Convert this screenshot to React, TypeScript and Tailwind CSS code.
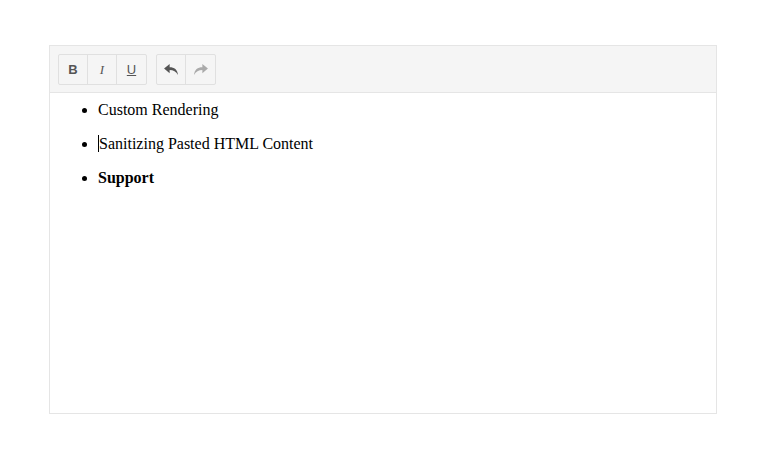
import React from "react";

const Btn = ({ children, last }: { children: React.ReactNode; last?: boolean }) => (
  <div className={`w-[29px] h-[29px] flex items-center justify-center ${last ? "" : "border-r border-[#e0e0e0]"}`}>{children}</div>
);

export default function App() {
  return (
    <div className="w-[770px] h-[463px] bg-white pt-[45px] pl-[49px]">
      <div className="w-[668px] h-[369px] border border-[#e5e5e5] flex flex-col">
        <div className="h-[47px] bg-[#f5f5f5] border-b border-[#e5e5e5] flex items-start pt-[8px] pl-[8px] gap-[9px]">
          <div className="flex border border-[#e0e0e0] rounded-[2px] bg-[#f5f5f5]" style={{ fontFamily: "'Liberation Sans', Arial, sans-serif" }}>
            <Btn><span className="text-[13px] font-bold text-[#555]">B</span></Btn>
            <Btn><span className="text-[13px] italic text-[#555]" style={{ fontFamily: "'Liberation Serif', serif" }}>I</span></Btn>
            <Btn last><span className="text-[13px] underline text-[#555]">U</span></Btn>
          </div>
          <div className="flex border border-[#e0e0e0] rounded-[2px] bg-[#f5f5f5]">
            <Btn>
              <svg width="15" height="13" viewBox="0 0 16 14"><path d="M6 1 L0 6 L6 11 V7.5 C10 7.5 13 9 15 13 C14.5 7 11 4.5 6 4.5 Z" fill="#555"/></svg>
            </Btn>
            <Btn last>
              <svg width="15" height="13" viewBox="0 0 16 14" style={{ transform: "scaleX(-1)" }}><path d="M6 1 L0 6 L6 11 V7.5 C10 7.5 13 9 15 13 C14.5 7 11 4.5 6 4.5 Z" fill="#aaa"/></svg>
            </Btn>
          </div>
        </div>
        <ul className="list-disc pl-[48px] pt-[7px] text-[16px] text-black" style={{ fontFamily: "'Liberation Serif', 'Times New Roman', serif" }}>
          <li className="h-[34px] leading-[20px]">Custom Rendering</li>
          <li className="h-[34px] leading-[20px]">
            <span className="border-l border-black">Sanitizing</span> Pasted HTML Content
          </li>
          <li className="h-[34px] leading-[20px] font-bold">Support</li>
        </ul>
      </div>
    </div>
  );
}
